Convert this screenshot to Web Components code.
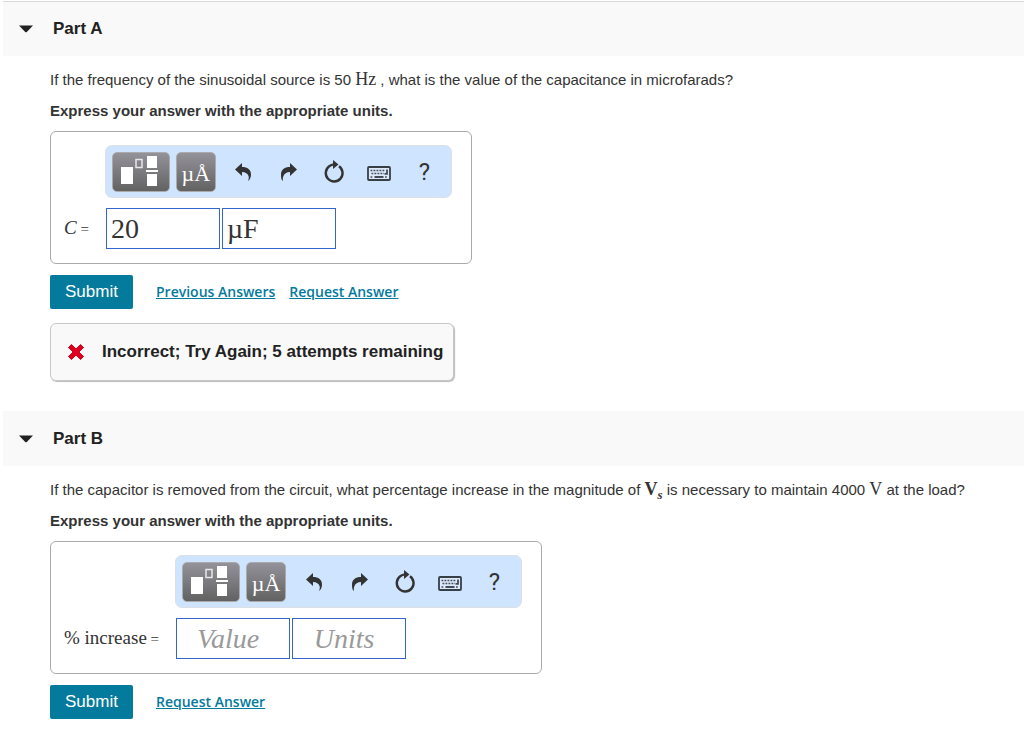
<!DOCTYPE html>
<html lang="en">
<head>
<meta charset="utf-8">
<title>Part A and Part B</title>
<meta name="viewport" content="width=device-width, initial-scale=1">
<style>
body { margin: 0; background: #fff; color: #333; font: 15px/20px "Liberation Sans", Arial, sans-serif; }
main { padding: 1px 0 0 3px; }
</style>
</head>
<body>
<main>
  <question-part heading="Part A" class="first">
    <span slot="question">If the frequency of the sinusoidal source is 50 <math-text>Hz</math-text> , what is the value of the capacitance in microfarads?</span>
    <span slot="instruction">Express your answer with the appropriate units.</span>
    <answer-box value="20" units="µF"><math-text italic>C</math-text></answer-box>
    <answer-actions slot="actions" links="Previous Answers|Request Answer"></answer-actions>
    <answer-feedback slot="feedback">Incorrect; Try Again; 5 attempts remaining</answer-feedback>
  </question-part>
  <question-part heading="Part B" class="last">
    <span slot="question">If the capacitor is removed from the circuit, what percentage increase in the magnitude of <math-text bold sub="s">V</math-text> is necessary to maintain 4000 <math-text>V</math-text> at the load?</span>
    <span slot="instruction">Express your answer with the appropriate units.</span>
    <answer-box><math-text>% increase</math-text></answer-box>
    <answer-actions slot="actions" links="Request Answer"></answer-actions>
  </question-part>
</main>

<script>
class ShadowElement extends HTMLElement {
  connectedCallback() {
    if (!this.shadowRoot) this.attachShadow({ mode: "open" }).innerHTML = this.render();
  }
}

customElements.define("math-text", class extends ShadowElement {
  render() {
    const sub = this.getAttribute("sub");
    return `<style>
      :host { display: inline; font-family: "Liberation Serif", "Times New Roman", serif; font-size: var(--math-size, 18px); line-height: 1; }
      :host([italic]) { font-style: italic; }
      :host([bold]) { font-weight: bold; }
      sub { font-size: 13px; font-style: italic; line-height: 0; vertical-align: -4px; }
    </style><slot></slot>${sub ? `<sub>${sub}</sub>` : ""}`;
  }
});

customElements.define("question-part", class extends ShadowElement {
  render() {
    return `<style>
      :host { display: block; }
      h2 { margin: 0; background: #f9f9f9; border-top: 1px solid #f9f9f9; }
      :host(.first) h2 { border-top-color: #d9dcda; }
      h2 button { display: flex; align-items: center; gap: 20px; width: 100%; height: 54px; padding: 0 16px;
        border: 0; background: none; color: #222; font: bold 17px/20px "Liberation Sans", Arial, sans-serif; text-align: left; }
      svg { display: block; width: 14px; height: 8px; }
      .body { padding: 13px 0 30px 47px; }
      :host(.last) .body { padding-bottom: 12px; }
      p { margin: 0; line-height: 22px; }
      .instruction { font-weight: bold; margin: 10px 0; line-height: 20px; }
    </style>
    <h2><button type="button" aria-expanded="true">
      <svg viewBox="0 0 14 8" aria-hidden="true"><path d="M0 .5h14L7.800 7q-.8.7-1.600 0z" fill="#222"/></svg><span>${this.getAttribute("heading")}</span>
    </button></h2>
    <div class="body">
      <p><slot name="question"></slot></p>
      <p class="instruction"><slot name="instruction"></slot></p>
      <slot></slot>
      <slot name="actions"></slot>
      <slot name="feedback"></slot>
    </div>`;
  }
});

customElements.define("math-toolbar", class extends ShadowElement {
  render() {
    return `<style>
      :host { display: flex; align-items: center; box-sizing: border-box; height: 53px; padding: 0 3px 0 6px;
        border: 1px solid #dcdfe3; border-radius: 7px; background: #cfe5ff; }
      button { flex: none; display: grid; place-items: center; width: 45px; height: 40px; margin: 0; padding: 0; border: 0;
        background: none; color: #333; }
      .dark { width: 40px; margin-right: 6px; border: 1px solid #aaa; border-radius: 5px;
        background: linear-gradient(#94929a, #626262); color: #fff; font: 22px/28px "Liberation Serif", serif; }
      .dark span { padding-top: 4px; }
      .wide { width: 58px; }
      .help { font: 24px/28px Roboto, sans-serif; }
      svg { display: block; }
    </style>
    <button type="button" class="dark wide" aria-label="Templates">
      <svg width="56" height="38" viewBox="0 0 56 38" fill="#fff"><path d="M8 14h12v17H8zM34 3h10v12H34zM34 21h10v12H34zM33 17h12v2H33z"/><path d="M23 6.500h6v8h-6z" fill="none" stroke="#e8e8ea" stroke-width="1.500"/></svg>
    </button>
    <button type="button" class="dark"><span>µÅ</span></button>
    <button type="button" aria-label="Undo">
      <svg width="20" height="20" viewBox="0 0 20 20" fill="#333"><path d="M1 7.500 8 1v4c5.500 0 9 2.500 9 7.500 0 3-1.200 5.300-3 6.500.9-2 1-3.600.5-5C13.700 11.500 11.500 10.200 8 10v4z"/></svg>
    </button>
    <button type="button" aria-label="Redo">
      <svg width="18" height="20" viewBox="0 0 18 20" fill="#333"><path d="M17 7.500 10 1v4c-5.500 0-9 2.500-9 7.500 0 3 .2 5.300 2 6.500-.3-2-.2-3.600.5-5 1-2.500 3-3.800 6.500-4v4z"/></svg>
    </button>
    <button type="button" aria-label="Reset">
      <svg width="22" height="24" viewBox="0 0 22 24"><path d="M6.200 6.300A8.400 8.400 0 1 0 16 6.200M6.200 6.300A8.400 8.400 0 0 1 11 4.400" fill="none" stroke="#333" stroke-width="2.400"/><path d="M10 0 15.500 4.500 10 9z" fill="#333"/></svg>
    </button>
    <button type="button" aria-label="Keyboard">
      <svg width="24" height="20" viewBox="0 0 24 20"><rect x="1" y="5" width="22" height="13" rx="1" fill="#dbe9fa" stroke="#383e46" stroke-width="1.800"/><path d="M3.500 8.500H18M4.500 11.500H17M3.500 15H6M18 15h2.500" stroke="#454b54" stroke-width="1.600" stroke-dasharray="1.800 1.200" fill="none"/><path d="M7.500 15h9M20 7.500v4.300h-2.500" stroke="#454b54" stroke-width="1.800" fill="none"/></svg>
    </button>
    <button type="button" class="help" aria-label="Help">?</button>`;
  }
});

customElements.define("answer-box", class extends ShadowElement {
  render() {
    const value = this.getAttribute("value") || "";
    const units = this.getAttribute("units") || "";
    return `<style>
      :host { display: grid; grid-template-columns: auto 347px; column-gap: 16px; row-gap: 10px; width: fit-content;
        box-sizing: border-box; padding: 13px 19px 14px 13px; border: 1px solid #aaa; border-radius: 6px; --math-size: 19px; }
      math-toolbar { grid-column: 2; }
      label { grid-column: 1; align-self: center; font: 15px/24px "Liberation Serif", serif; white-space: nowrap; }
      .fields { grid-column: 2; display: flex; gap: 2px; padding-left: 1px; }
      input { box-sizing: border-box; width: 114px; height: 41px; margin: 0; padding: 0 4px; border: 1px solid #3366cc;
        border-radius: 0; background: #fff; color: #333; font: 28px/36px "Liberation Serif", "Times New Roman", serif; outline: 0; }
      input::placeholder { color: #999; opacity: 1; font-style: italic; text-align: center; }
      input:placeholder-shown { padding-right: 14px; }
    </style>
    <math-toolbar></math-toolbar>
    <label for="value"><slot></slot> =</label>
    <div class="fields">
      <input id="value" type="text" value="${value}" placeholder="Value">
      <input type="text" aria-label="Units" value="${units}" placeholder="Units">
    </div>`;
  }
});

customElements.define("answer-actions", class extends ShadowElement {
  render() {
    const links = this.getAttribute("links").split("|").map(text => `<a href="#">${text}</a>`).join("");
    return `<style>
      :host { display: flex; align-items: center; margin-top: 11px; }
      button { width: 83px; height: 34px; margin: 0 23px 0 0; padding: 0; border: 0; border-radius: 2px;
        background: #047a9c; color: #fff; font: 17px/20px "Liberation Sans", Arial, sans-serif; }
      nav { display: flex; gap: 14px; }
      a { color: #047a9c; font: 600 14px/20px "Open Sans", sans-serif; text-decoration: underline; }
    </style>
    <button type="button">Submit</button><nav>${links}</nav>`;
  }
});

customElements.define("answer-feedback", class extends ShadowElement {
  render() {
    return `<style>
      :host { display: flex; align-items: center; gap: 17px; width: fit-content; box-sizing: border-box; height: 58px; margin-top: 14px;
        padding: 0 10px 0 16px; border: 1px solid #c7c7c7; border-radius: 6px; background: #f9f9f9; box-shadow: 1px 1px 1px #bbb;
        color: #222; font: bold 17px/20px "Liberation Sans", Arial, sans-serif; }
      svg { display: block; flex: none; width: 18px; height: 18px; }
    </style>
    <svg viewBox="0 0 18 18" aria-hidden="true"><path d="M4.500 1.500 9 6l4.500-4.500 3 3L12 9l4.500 4.500-3 3L9 12l-4.500 4.500-3-3L6 9 1.500 4.500z" fill="#db0020" stroke="#db0020" stroke-linejoin="round"/></svg>
    <span><slot></slot></span>`;
  }
});
</script>
</body>
</html>
